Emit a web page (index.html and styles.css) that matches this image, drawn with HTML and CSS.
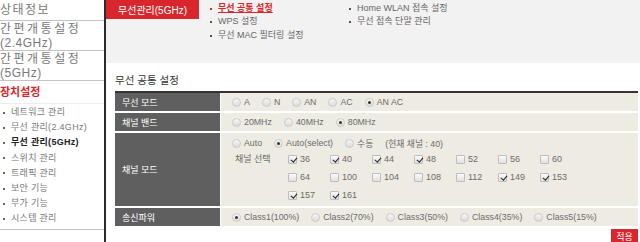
FILE: index.html
```html
<!DOCTYPE html>
<html lang="ko">
<head>
<meta charset="utf-8">
<title>무선 공통 설정</title>
<link rel="stylesheet" href="styles.css">
</head>
<body>
<div class="page">
  <aside class="side">
    <div class="s-top one">상태정보</div>
    <div class="s-top">간편개통설정<br><span class="en">(2.4GHz)</span></div>
    <div class="s-top">간편개통설정<br><span class="en">(5GHz)</span></div>
    <div class="s-sec">장치설정</div>
    <ul class="s-list">
      <li>네트워크 관리</li>
      <li>무선 관리(2.4GHz)</li>
      <li class="cur">무선 관리(5GHz)</li>
      <li>스위치 관리</li>
      <li>트래픽 관리</li>
      <li>보안 기능</li>
      <li>부가 기능</li>
      <li>시스템 관리</li>
    </ul>
  </aside>
  <main class="main">
    <header class="hdr">
      <div class="tab">무선관리(5GHz)</div>
      <ul class="sub sub1">
        <li class="act">무선 공통 설정</li>
        <li>WPS 설정</li>
        <li>무선 MAC 필터링 설정</li>
      </ul>
      <ul class="sub">
        <li>Home WLAN 접속 설정</li>
        <li>무선 접속 단말 관리</li>
      </ul>
    </header>
    <section class="content">
      <h2 class="ttl">무선 공통 설정</h2>
      <div class="tbl">
        <div class="lab">무선 모드</div>
        <div class="val">
          <div class="opts">
            <span class="opt"><i class="rd"></i>A</span>
            <span class="opt"><i class="rd"></i>N</span>
            <span class="opt"><i class="rd"></i>AN</span>
            <span class="opt"><i class="rd"></i>AC</span>
            <span class="opt"><i class="rd on"></i>AN AC</span>
          </div>
        </div>

        <div class="lab">채널 밴드</div>
        <div class="val">
          <div class="opts">
            <span class="opt"><i class="rd"></i>20MHz</span>
            <span class="opt"><i class="rd"></i>40MHz</span>
            <span class="opt"><i class="rd on"></i>80MHz</span>
          </div>
        </div>

        <div class="lab">채널 모드</div>
        <div class="val tall">
          <div class="opts line1">
            <span class="opt"><i class="rd"></i>Auto</span>
            <span class="opt"><i class="rd on"></i>Auto(select)</span>
            <span class="opt"><i class="rd"></i>수동</span>
            <span class="opt">(현재 채널 : 40)</span>
          </div>
          <div class="chgrid">
            <span class="chlabel">채널 선택</span>
            <span class="chk"><i class="cb on"></i>36</span>
            <span class="chk"><i class="cb on"></i>40</span>
            <span class="chk"><i class="cb on"></i>44</span>
            <span class="chk"><i class="cb on"></i>48</span>
            <span class="chk"><i class="cb"></i>52</span>
            <span class="chk"><i class="cb"></i>56</span>
            <span class="chk"><i class="cb"></i>60</span>
            <span class="chk"><i class="cb"></i>64</span>
            <span class="chk"><i class="cb"></i>100</span>
            <span class="chk"><i class="cb"></i>104</span>
            <span class="chk"><i class="cb"></i>108</span>
            <span class="chk"><i class="cb"></i>112</span>
            <span class="chk"><i class="cb on"></i>149</span>
            <span class="chk"><i class="cb on"></i>153</span>
            <span class="chk"><i class="cb on"></i>157</span>
            <span class="chk"><i class="cb on"></i>161</span>
          </div>
        </div>

        <div class="lab">송신파워</div>
        <div class="val">
          <div class="opts">
            <span class="opt"><i class="rd on"></i>Class1(100%)</span>
            <span class="opt"><i class="rd"></i>Class2(70%)</span>
            <span class="opt"><i class="rd"></i>Class3(50%)</span>
            <span class="opt"><i class="rd"></i>Class4(35%)</span>
            <span class="opt"><i class="rd"></i>Class5(15%)</span>
          </div>
        </div>
      </div>
      <div class="actions"><button class="btn" type="button">적용</button></div>
    </section>
  </main>
</div>
</body>
</html>
```
FILE: styles.css
```css
* { box-sizing: border-box; }
html, body { margin: 0; padding: 0; overflow: hidden; background: #fff; }
body { font-family: "Liberation Sans", "Noto Sans CJK KR", sans-serif; color: #666; }
ul { list-style: none; margin: 0; padding: 0; }

.page { display: flex; height: 242px; overflow: hidden; }

/* sidebar */
.side { width: 106px; flex: none; border-right: 2px solid #2b2b2b; }
.s-top {
  border-bottom: 1px solid #c4c4c4;
  color: #7a7a7a;
  font-size: 12px;
  line-height: 14px;
  letter-spacing: 2.5px;
  padding: 1px 0 0;
  white-space: nowrap;
}
.s-top .en { letter-spacing: 0.5px; }
.s-top.one { padding: 3px 0 3px; letter-spacing: 1.5px; }
.s-sec {
  color: #d8262c;
  font-weight: bold;
  font-size: 11px;
  line-height: 14px;
  padding: 4px 0 4px;
  border-bottom: 1px solid #ececec;
}
.s-list { padding: 1px 0 2px; border-bottom: 1px solid #c4c4c4; }
.s-list li {
  display: flex;
  align-items: center;
  gap: 6px;
  font-size: 9px;
  line-height: 15.2px;
  height: 15.2px;
  letter-spacing: 0.3px;
  color: #777;
  padding-left: 3px;
}
.s-list li::before { content: ""; width: 2px; height: 2px; background: #666; flex: none; }
.s-list li.cur { color: #222; font-weight: bold; }

/* main */
.main { flex: 1; min-width: 0; }
.hdr { display: flex; align-items: flex-start; height: 63px; background: #f2f2f2; }
.tab {
  width: 93px; height: 19px;
  background: #d8262c; color: #fff;
  font-size: 10px;
  display: flex; align-items: center; justify-content: center;
}
.sub { padding-top: 2px; }
.sub1 { margin-left: 11px; width: 139px; }
.sub li {
  display: flex; align-items: center; gap: 6px;
  font-size: 9px; line-height: 13.4px; color: #666;
}
.sub li::before { content: ""; width: 2px; height: 2px; background: #555; flex: none; }
.sub li.act { color: #d8262c; font-weight: bold; text-decoration: underline; }
.sub li.act::before { background: #d8262c; }

.content { padding: 0 2px 0 9px; }
.ttl { margin: 10px 0 4px; font-size: 10.5px; line-height: 14px; font-weight: normal; color: #333; }

.tbl {
  display: grid;
  grid-template-columns: 105px 1fr;
  gap: 2px 1px;
  border-top: 2px solid #333;
}
.lab {
  background: #5f5f5f; color: #fff;
  font-size: 9px;
  padding-left: 7px;
  min-height: 18px;
  display: flex; align-items: center;
}
.val { background: #eeebe2; padding-left: 11px; min-height: 18px; display: flex; align-items: center; }
.val.tall { flex-direction: column; align-items: stretch; padding-top: 3px; padding-bottom: 2px; }

.opts { display: flex; align-items: center; gap: 12px; font-size: 8.8px; color: #6b6b6b; white-space: nowrap; }
.line1 { height: 14px; }
.opt { display: flex; align-items: center; gap: 3px; }

.rd {
  display: inline-block; position: relative;
  width: 9px; height: 9px; border-radius: 50%;
  border: 1px solid #cacaca;
  background: linear-gradient(#f6f6f6, #dcdcdc);
}
.rd.on::after {
  content: ""; position: absolute; left: 2px; top: 2px;
  width: 3px; height: 3px; border-radius: 50%; background: #333;
}

.chgrid {
  display: grid;
  grid-template-columns: 53px repeat(7, 42px);
  grid-auto-rows: 18px;
  align-items: center;
  padding-left: 3px;
  font-size: 9px; color: #6b6b6b;
}
.chlabel { grid-row: span 3; align-self: start; line-height: 18px; }
.chk { display: flex; align-items: center; gap: 3px; }
.cb {
  display: inline-block; position: relative;
  width: 9px; height: 9px;
  border: 1px solid #bdbdbd; border-radius: 1px;
  background: linear-gradient(#fbfbfb, #e0e0e0);
}
.cb.on::after {
  content: ""; position: absolute; left: 2.5px; top: 0;
  width: 2.5px; height: 5px;
  border: solid #222; border-width: 0 1.5px 1.5px 0;
  transform: rotate(40deg);
}

.actions { display: flex; justify-content: flex-end; margin-top: 3px; }
.btn {
  display: block;
  background: #d8262c; color: #fff; border: 0;
  font-family: inherit; font-size: 9px; line-height: 11px;
  width: 27px; height: 16px; padding: 0;
}
```
